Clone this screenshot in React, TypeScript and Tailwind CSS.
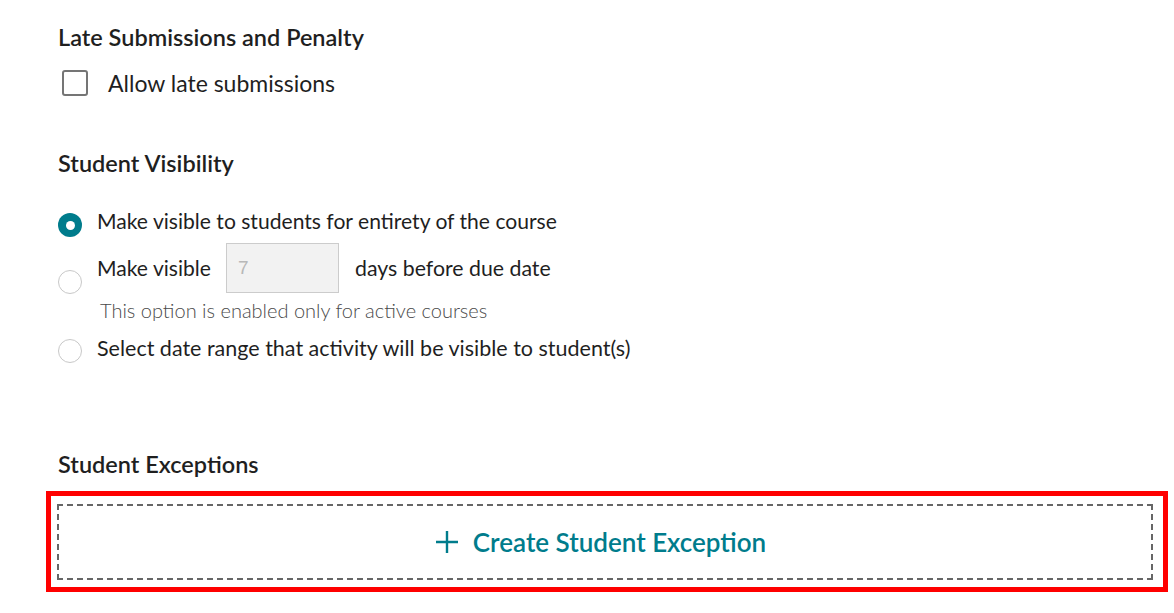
export default function App() {
  return (
    <div className="min-h-[613px] w-[1174px] bg-white font-['Lato',sans-serif] text-[#1f1f1f]">
      <div className="pl-[58px] pt-[24px]">
        <h2 className="text-[23.5px] font-semibold leading-[26px]">Late Submissions and Penalty</h2>
        <label className="mt-[20px] flex items-center gap-[20px] pl-[4px]">
          <span className="h-[26px] w-[26px] rounded-[3px] border-2 border-[#757575] bg-white" />
          <span className="text-[23px] leading-[26px]">Allow late submissions</span>
        </label>

        <h2 className="mt-[54px] text-[23.5px] font-semibold leading-[26px]">Student Visibility</h2>

        <div className="mt-[37px] flex flex-col">
          <label className="flex items-center gap-[15px]">
            <span className="flex h-[24px] w-[24px] items-center justify-center rounded-full bg-[#007c8c]">
              <span className="h-[9px] w-[9px] rounded-full bg-white" />
            </span>
            <span className="-mt-[8px] text-[21.1px] leading-[26px]">Make visible to students for entirety of the course</span>
          </label>

          <div className="mt-[6px] flex gap-[15px]">
            <span className="mt-[27px] h-[24px] w-[24px] shrink-0 rounded-full border border-[#c8c8c8] bg-white" />
            <div className="flex flex-col">
              <div className="flex items-center">
                <span className="text-[21.1px] leading-[26px]">Make visible</span>
                <span className="ml-[15px] flex h-[50px] w-[113px] items-center border border-[#cccccc] bg-[#f2f2f2] pl-[11px] font-['Liberation_Sans',sans-serif] text-[19px] text-[#b8b8b8]">
                  7
                </span>
                <span className="ml-[16px] text-[21.3px] leading-[26px]">days before due date</span>
              </div>
              <span className="mt-[5px] pl-[3px] text-[20px] font-light leading-[24px] text-[#4a4a4a]">
                This option is enabled only for active courses
              </span>
            </div>
          </div>

          <label className="mt-[17px] flex items-center gap-[15px]">
            <span className="h-[24px] w-[24px] rounded-full border border-[#c8c8c8] bg-white" />
            <span className="-mt-[6px] text-[21.5px] leading-[26px]">Select date range that activity will be visible to student(s)</span>
          </label>
        </div>

        <h2 className="mt-[88px] text-[23.5px] font-semibold leading-[26px]">Student Exceptions</h2>
      </div>

      <div className="ml-[46px] mt-[14px] w-[1122px] border-[5px] border-[#ff0000] pb-[7px] pl-[6px] pr-[10px] pt-[8px]">
        <button className="flex h-[76px] w-full items-center justify-center gap-[15px] border-2 border-dashed border-[#666666] bg-white pr-[8px] text-[#007c8c]">
          <svg width="22" height="22" viewBox="0 0 22 22" fill="none" stroke="currentColor" strokeWidth="2.4">
            <path d="M11 0v22M0 11h22" />
          </svg>
          <span className="text-[26px] font-semibold leading-[30px]">Create Student Exception</span>
        </button>
      </div>
    </div>
  );
}
